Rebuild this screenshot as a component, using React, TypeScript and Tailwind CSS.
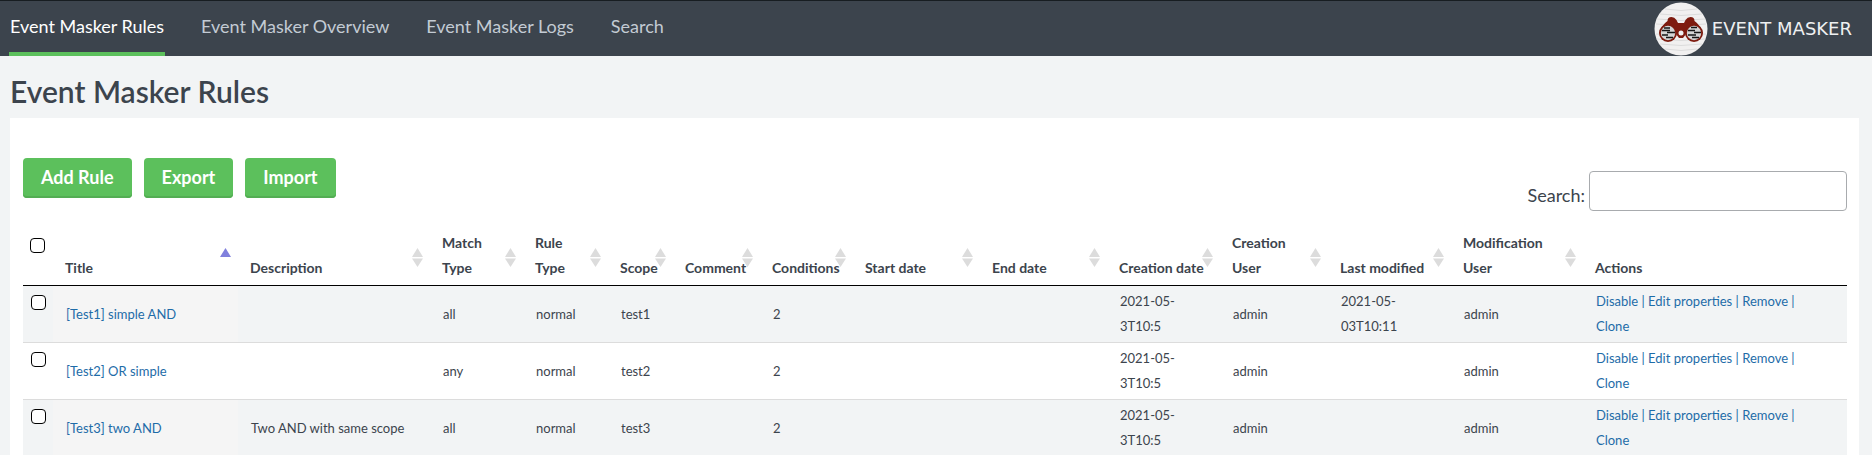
type Column = {
  label: string;
  width: string;
  sort?: 'asc' | 'none';
  stacked?: boolean;
};

type Rule = {
  title: string;
  description: string;
  match: string;
  scope: string;
  created: string;
  modified: string;
};

const navItems = ['Event Masker Rules', 'Event Masker Overview', 'Event Masker Logs', 'Search'];

const columns: Column[] = [
  { label: 'Title', width: 'w-[185px]', sort: 'asc' },
  { label: 'Description', width: 'w-[192px]', sort: 'none' },
  { label: 'Match Type', width: 'w-[93px]', sort: 'none', stacked: true },
  { label: 'Rule Type', width: 'w-[85px]', sort: 'none', stacked: true },
  { label: 'Scope', width: 'w-[65px]', sort: 'none' },
  { label: 'Comment', width: 'w-[87px]', sort: 'none' },
  { label: 'Conditions', width: 'w-[93px]', sort: 'none' },
  { label: 'Start date', width: 'w-[127px]', sort: 'none' },
  { label: 'End date', width: 'w-[127px]', sort: 'none' },
  { label: 'Creation date', width: 'w-[113px]', sort: 'none' },
  { label: 'Creation User', width: 'w-[108px]', sort: 'none', stacked: true },
  { label: 'Last modified', width: 'w-[123px]', sort: 'none' },
  { label: 'Modification User', width: 'w-[132px]', sort: 'none', stacked: true },
  { label: 'Actions', width: 'w-[264px]' },
];

const rules: Rule[] = [
  { title: '[Test1] simple AND', description: '', match: 'all', scope: 'test1', created: '2021-05-3T10:5', modified: '2021-05-03T10:11' },
  { title: '[Test2] OR simple', description: '', match: 'any', scope: 'test2', created: '2021-05-3T10:5', modified: '' },
  { title: '[Test3] two AND', description: 'Two AND with same scope', match: 'all', scope: 'test3', created: '2021-05-3T10:5', modified: '' },
];

const actions = ['Disable', 'Edit properties', 'Remove', 'Clone'];

function Logo() {
  return (
    <svg viewBox="0 0 54 54" className="size-[54px]" aria-hidden="true">
      <circle cx="27" cy="27" r="26.500" fill="#f1f0f0" />
      <g stroke="#dcdcdc" strokeWidth="1" fill="none">
        <path d="M11 7q16 3 32 0M6 12q21 3 42 0M3 17q24 3 48 0M2 22q25 3 50 0M2 32q25 3 50 0M3 37q24 3 48 0M6 42q21 3 42 0M11 47q16 3 32 0" />
      </g>
      <path
        d="M13.500 19q0-4 4-4q3 0 5 3l1.500 3h6l1.500-3q2-3 5-3q4 0 4 4q6 4 8 12H5.500q2-8 8-12z"
        fill="#7e1b0f"
      />
      <circle cx="14" cy="31" r="9" fill="#7e1b0f" />
      <circle cx="40" cy="31" r="9" fill="#7e1b0f" />
      <path d="M22 24h10v8l-3 4h-4l-3-4z" fill="#7e1b0f" />
      <circle cx="27" cy="31" r="2.500" fill="#f1f0f0" />
      <circle cx="14" cy="31" r="7.200" fill="#d5d5d5" />
      <circle cx="40" cy="31" r="7.200" fill="#d5d5d5" />
      <path
        d="M10 26h6M8 28.500h8M13 30.500h8M8 33h6M12 35.500h7M37 25.500h6M34 28.500h7M40 30.500h7M34 33h8M38 35.500h7"
        stroke="#161616"
        strokeWidth="1.700"
      />
    </svg>
  );
}

function SortIcon({ sort }: { sort: 'asc' | 'none' }) {
  return (
    <svg viewBox="0 0 11 19" className="absolute right-[7px] bottom-[18px] h-[19px] w-[11px]" aria-hidden="true">
      <path d="M5.500 0L11 9H0z" fill={sort === 'asc' ? '#8080dd' : '#dcdcdc'} />
      {sort === 'none' && <path d="M0 10.500h11L5.500 19z" fill="#dcdcdc" />}
    </svg>
  );
}

const checkbox =
  'block size-[15px] appearance-none rounded-[4px] border border-black bg-white checked:bg-[#5cc05c]';

export default function App() {
  return (
    <div className="min-h-screen bg-[#f2f4f5] font-[Lato,sans-serif] text-[#3c444d]">
      <header className="flex h-14 items-stretch justify-between border-t border-[#171d21] bg-[#3c444d] pr-5 pl-[9px]">
        <nav className="flex gap-[35px] text-[18px]">
          {navItems.map((item, i) => (
            <a
              key={item}
              href="#"
              className={
                i === 0
                  ? 'flex items-center border-b-4 border-[#5cc05c] px-px text-white'
                  : 'flex items-center border-b-4 border-transparent px-px text-[#c3cbd4]'
              }
            >
              {item}
            </a>
          ))}
        </nav>
        <div className="flex items-center gap-1">
          <Logo />
          <span className="font-['DejaVu_Sans',sans-serif] text-[18px] text-[#eef0f1]">EVENT MASKER</span>
        </div>
      </header>

      <h1 className="px-[10px] pt-[17px] pb-[9px] text-[30px] leading-9 font-semibold">Event Masker Rules</h1>

      <main className="mr-[13px] ml-[10px] bg-white pr-3 pl-[13px]">
        <div className="flex items-end justify-between pt-10">
          <div className="flex gap-3 pb-[13px]">
            {['Add Rule', 'Export', 'Import'].map((label) => (
              <button
                key={label}
                type="button"
                className="h-10 rounded-[4px] bg-[#5cc05c] px-[18px] pb-px text-[18px] font-bold text-white shadow-[inset_0_-2px_0_#53ad53]"
              >
                {label}
              </button>
            ))}
          </div>
          <label className="flex items-center gap-1 text-[18px]">
            <span className="pt-2">Search:</span>
            <input
              type="search"
              className="h-10 w-[258px] rounded-[4px] border border-[#a8abae] bg-white px-2 outline-none"
            />
          </label>
        </div>

        <table className="mt-4 w-full table-fixed border-collapse text-[13px] leading-[25px]">
          <colgroup>
            <col className="w-[30px]" />
            {columns.map((c) => (
              <col key={c.label} className={c.width} />
            ))}
          </colgroup>
          <thead>
            <tr className="border-b border-black">
              <th className="pt-[11px] pl-[7px] text-left align-top">
                <input type="checkbox" aria-label="Select all rules" className={checkbox} />
              </th>
              {columns.map((c) => (
                <th
                  key={c.label}
                  className="relative pt-[3px] pb-[5px] pl-3 text-left align-bottom text-[14px] font-bold whitespace-nowrap"
                >
                  {c.stacked
                    ? c.label.split(' ').map((word) => (
                        <span key={word} className="block">
                          {word}
                        </span>
                      ))
                    : c.label}
                  {c.sort && <SortIcon sort={c.sort} />}
                </th>
              ))}
            </tr>
          </thead>
          <tbody>
            {rules.map((r) => (
              <tr
                key={r.title}
                className="group border-b border-[#dcdcdc] odd:bg-[#f2f4f5] [&>td]:py-[3px] [&>td]:pl-[13px]"
              >
                <td className="align-top">
                  <input type="checkbox" aria-label={`Select ${r.title}`} className={`${checkbox} mt-[6px] -ml-[5px]`} />
                </td>
                <td className="group-odd:bg-[#f5f5f5]">
                  <a href="#" className="text-[#1e6ca8]">
                    {r.title}
                  </a>
                </td>
                <td>{r.description}</td>
                <td>{r.match}</td>
                <td>normal</td>
                <td>{r.scope}</td>
                <td />
                <td>2</td>
                <td />
                <td />
                <td className="pr-7">{r.created}</td>
                <td>admin</td>
                <td className="pr-7">{r.modified}</td>
                <td>admin</td>
                <td className="pr-8 text-[#1e6ca8]">
                  {actions.map((a, i) => (
                    <span key={a}>
                      <a href="#">{a}</a>
                      {i < actions.length - 1 && ' | '}
                    </span>
                  ))}
                </td>
              </tr>
            ))}
          </tbody>
        </table>
      </main>
    </div>
  );
}
